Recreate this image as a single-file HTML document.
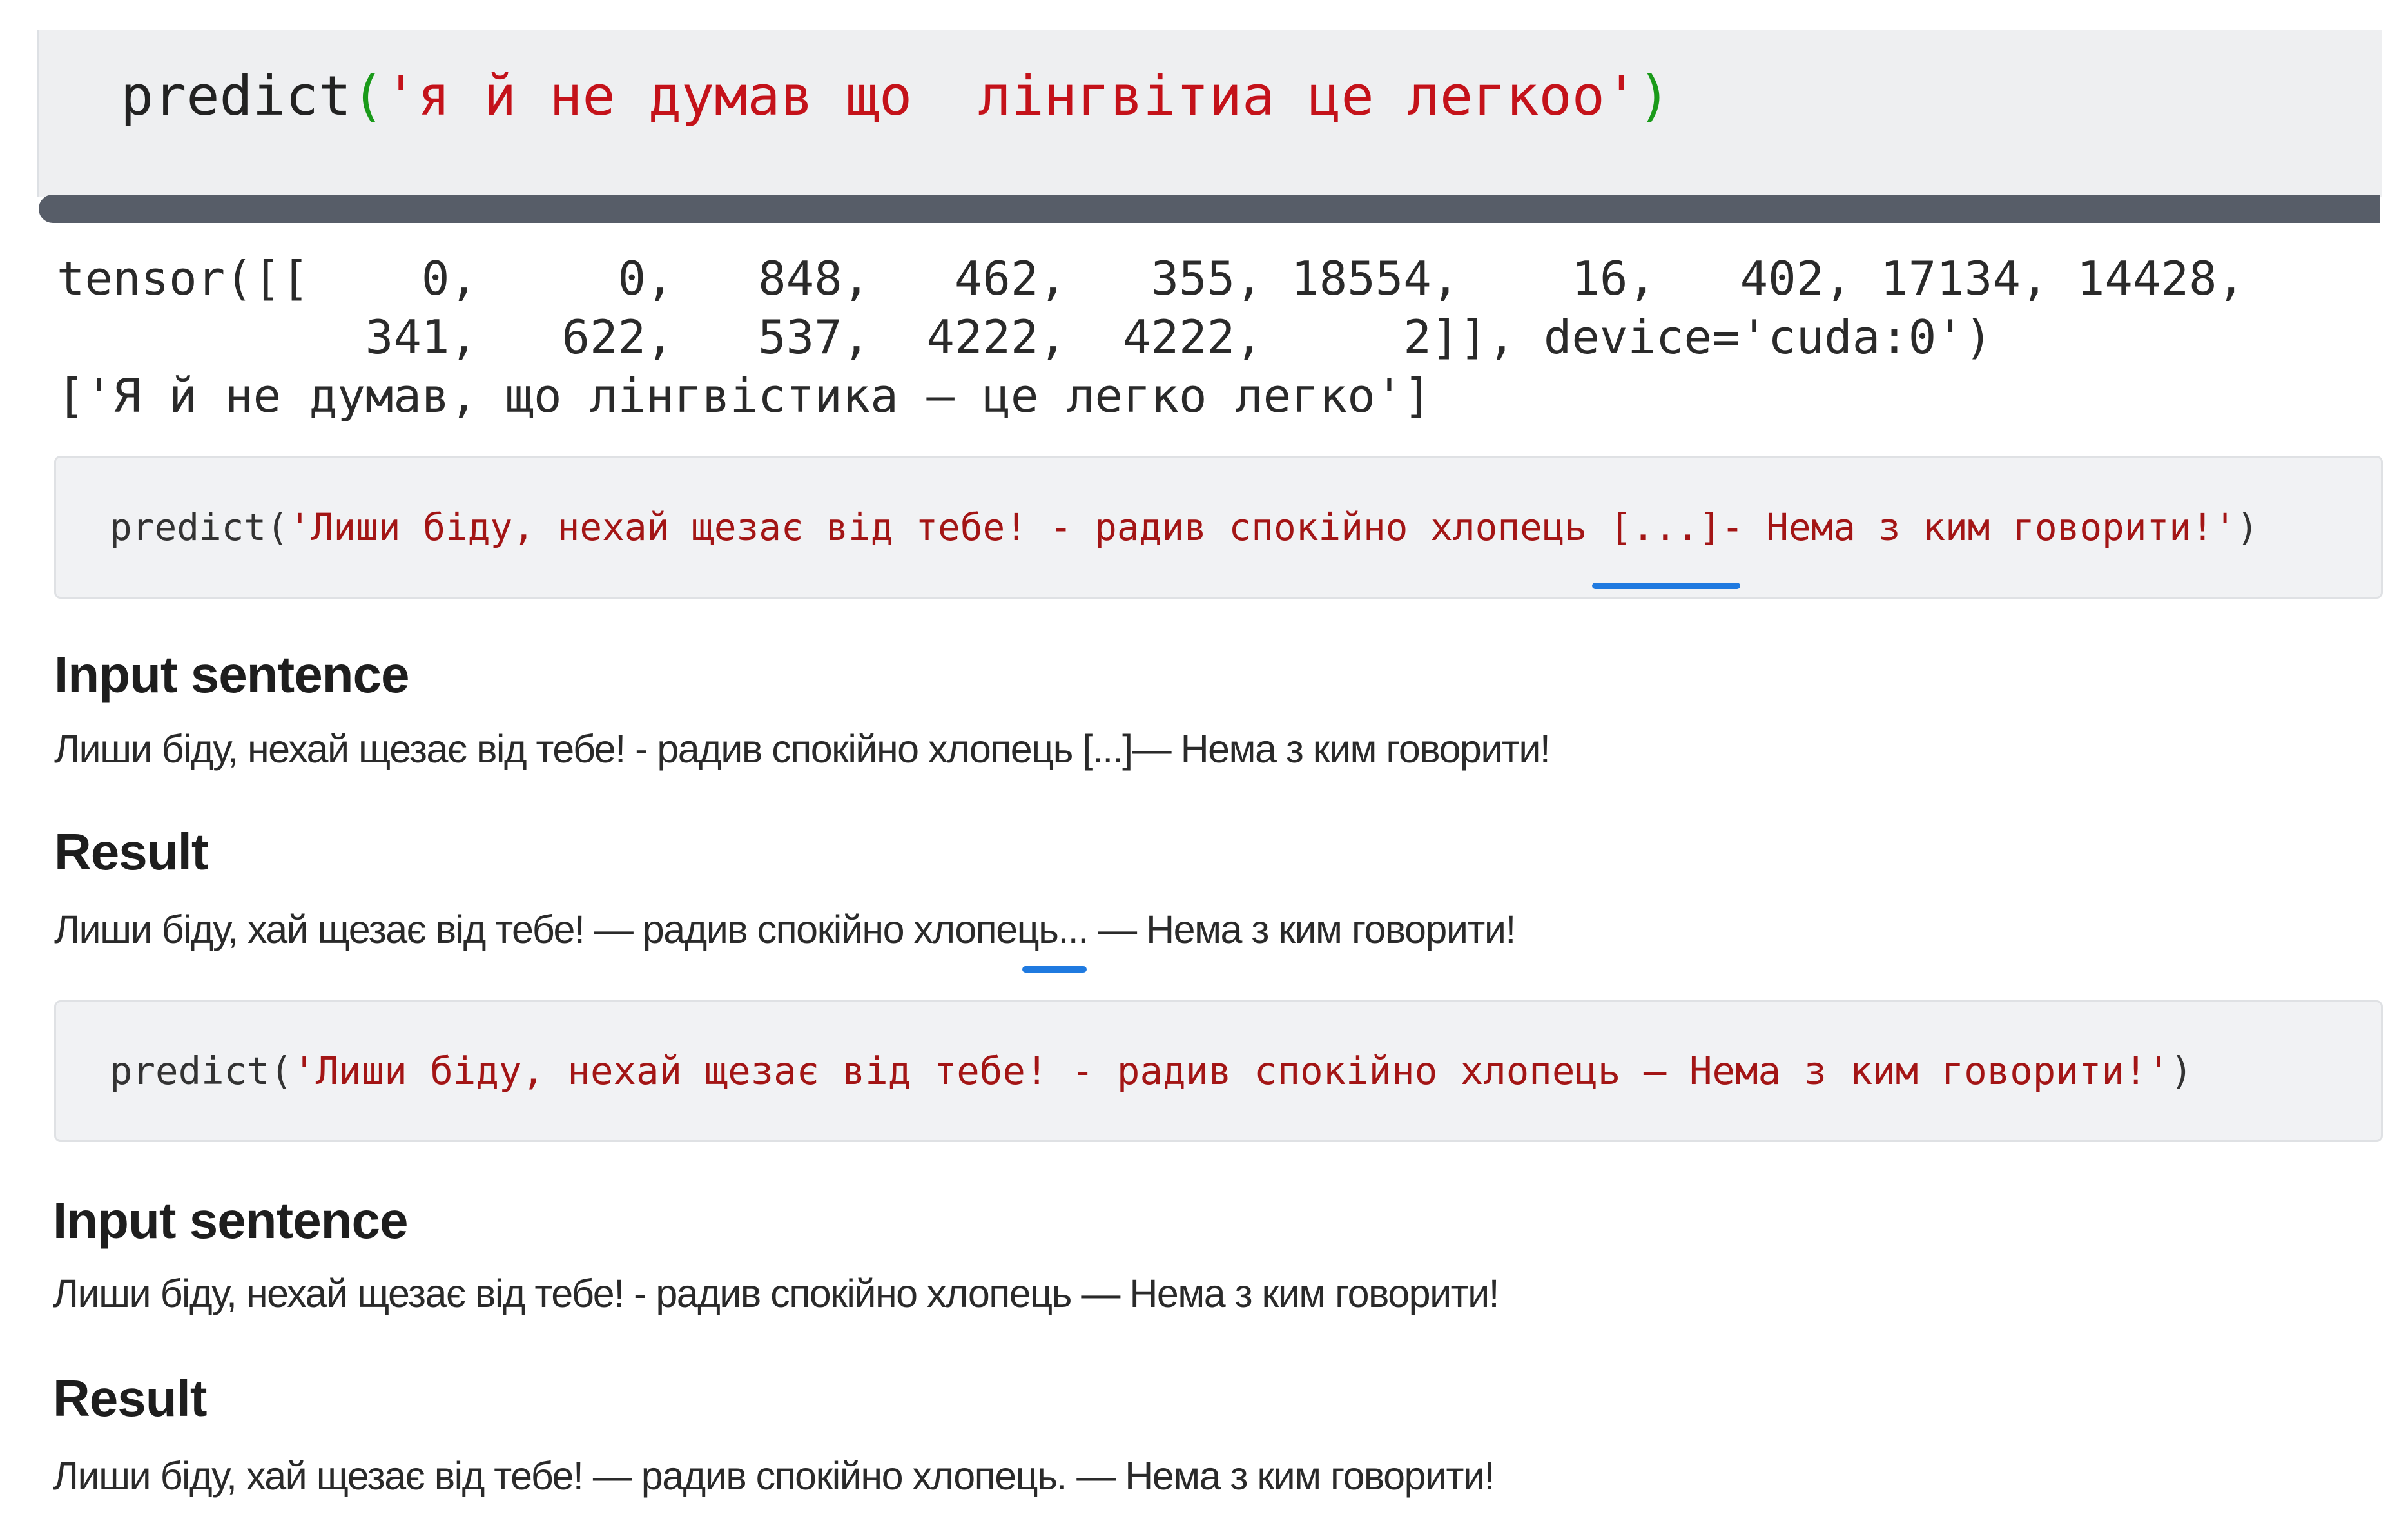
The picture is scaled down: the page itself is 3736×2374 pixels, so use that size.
<!DOCTYPE html>
<html><head><meta charset="utf-8"><style>
html,body{margin:0;padding:0;background:#fff;}
body{width:3736px;height:2374px;position:relative;overflow:hidden;}
.a{position:absolute;white-space:pre;}
.mono{font-family:"DejaVu Sans Mono","Liberation Mono",monospace;}
.sans{font-family:"Liberation Sans","DejaVu Sans",sans-serif;}
.r{color:#c4121a;}
.dr{color:#a31515;}
.g{color:#1a9a1a;}
.h{font-weight:600;color:#1e1e1e;font-size:80px;letter-spacing:-1px;}
.t{color:#2a2a2a;font-size:61px;letter-spacing:-1.5px;}
.blk{position:absolute;left:84px;width:3613px;background:#f1f2f4;border:3px solid #dfe1e4;border-radius:10px;box-sizing:border-box;}
</style></head><body>
<div style="position:absolute;left:57px;top:46px;width:3635px;height:260px;background:#eeeff1;border-left:3px solid #dde0e4;"></div>
<div style="position:absolute;left:60px;top:302px;width:3632px;height:44px;background:#575d68;border-radius:22px 0 0 22px;"></div>
<div class="a mono" style="left:187px;top:100px;font-size:85px;line-height:100px;color:#222;">predict<span class="g">(</span><span class="r">'я й не думав що  лінгвітиа це легкоо'</span><span class="g">)</span></div>

<div class="a mono" style="left:88px;top:388px;font-size:72.3px;line-height:91px;color:#2a2a2a;">tensor([[    0,     0,   848,   462,   355, 18554,    16,   402, 17134, 14428,
           341,   622,   537,  4222,  4222,     2]], device='cuda:0')
['Я й не думав, що лінгвістика – це легко легко']</div>

<div class="blk" style="top:707px;height:222px;"></div>
<div class="a mono" style="left:170px;top:778px;font-size:57.7px;line-height:80px;color:#333;">predict(<span class="dr">'Лиши біду, нехай щезає від тебе! - радив спокійно хлопець [...]- Нема з ким говорити!'</span>)</div>
<div style="position:absolute;left:2470px;top:904px;width:230px;height:10px;background:#1f7ae0;border-radius:5px;"></div>

<div class="a sans h" style="left:84px;top:1002px;line-height:90px;">Input sentence</div>
<div class="a sans t" style="left:84px;top:1127px;line-height:70px;">Лиши біду, нехай щезає від тебе! - радив спокійно хлопець [...]— Нема з ким говорити!</div>
<div class="a sans h" style="left:84px;top:1277px;line-height:90px;">Result</div>
<div class="a sans t" style="left:84px;top:1407px;line-height:70px;">Лиши біду, хай щезає від тебе! — радив спокійно хлопець... — Нема з ким говорити!</div>
<div style="position:absolute;left:1586px;top:1499px;width:100px;height:10px;background:#1f7ae0;border-radius:5px;"></div>

<div class="blk" style="top:1552px;height:220px;"></div>
<div class="a mono" style="left:170px;top:1622px;font-size:59px;line-height:80px;color:#333;">predict(<span class="dr">'Лиши біду, нехай щезає від тебе! - радив спокійно хлопець – Нема з ким говорити!'</span>)</div>

<div class="a sans h" style="left:82px;top:1849px;line-height:90px;">Input sentence</div>
<div class="a sans t" style="left:82px;top:1972px;line-height:70px;">Лиши біду, нехай щезає від тебе! - радив спокійно хлопець — Нема з ким говорити!</div>
<div class="a sans h" style="left:82px;top:2125px;line-height:90px;">Result</div>
<div class="a sans t" style="left:82px;top:2255px;line-height:70px;">Лиши біду, хай щезає від тебе! — радив спокійно хлопець. — Нема з ким говорити!</div>
</body></html>
